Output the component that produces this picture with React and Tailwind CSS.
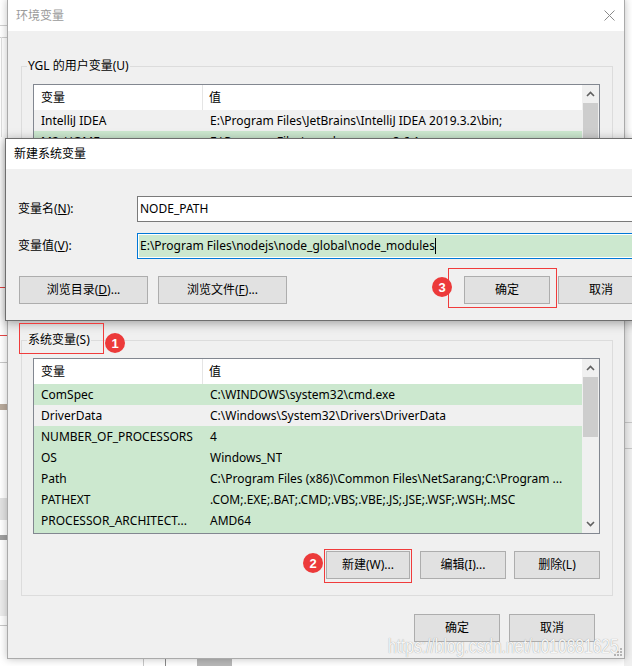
import React from "react";

function Btn({ children, className = "" }) {
  return (
    <div
      className={`h-[28px] shrink-0 flex items-center justify-center bg-[#e1e1e1] border border-[#adadad] text-black leading-none ${className}`}
    >
      {children}
    </div>
  );
}

function Chevron({ down = false }) {
  return (
    <svg width="9" height="6" viewBox="0 0 9 6">
      <path
        d={down ? "M1 1 L4.5 4.5 L8 1" : "M1 5 L4.5 1.5 L8 5"}
        stroke="#606060"
        strokeWidth="1.6"
        fill="none"
      />
    </svg>
  );
}

function Scrollbar() {
  return (
    <div className="w-[17px] shrink-0 bg-[#f0f0f0] flex flex-col">
      <div className="h-[18px] shrink-0 flex items-center justify-center">
        <Chevron />
      </div>
      <div className="mx-[1px] h-[60px] shrink-0 bg-[#cdcdcd]" />
      <div className="flex-1" />
      <div className="h-[18px] shrink-0 flex items-center justify-center">
        <Chevron down />
      </div>
    </div>
  );
}

function VarList({ rows }) {
  return (
    <div className="h-[176px] shrink-0 border border-[#828790] flex bg-white">
      <div className="flex-1 min-w-0 flex flex-col bg-[#cce8cf] overflow-hidden">
        <div className="h-[25px] shrink-0 flex bg-white">
          <div className="w-[169px] shrink-0 pl-[7px] flex items-center border-r border-[#e5e5e5]">
            变量
          </div>
          <div className="pl-[6px] flex items-center">值</div>
        </div>
        {rows.map((r, i) => (
          <div
            key={i}
            className={`h-[21px] shrink-0 flex items-center whitespace-nowrap ${
              r.light ? "bg-[#f0f0f0]" : ""
            }`}
          >
            <div className="w-[169px] shrink-0 pl-[7px] overflow-hidden">{r.n}</div>
            <div className="pl-[7px] overflow-hidden">{r.v}</div>
          </div>
        ))}
      </div>
      <Scrollbar />
    </div>
  );
}

function Group({ label, className = "", children }) {
  return (
    <div className={`relative border border-[#dcdcdc] shrink-0 ${className}`}>
      <span className="absolute left-[5px] top-[-9px] px-[1px] bg-[#f0f0f0] leading-[16px] whitespace-nowrap">
        {label}
      </span>
      {children}
    </div>
  );
}

function Badge({ n, className }) {
  return (
    <div
      className={`absolute w-[20px] h-[20px] rounded-full bg-[#ec3a3a] text-white flex items-center justify-center text-[13px] font-bold leading-none font-['Liberation_Sans',sans-serif] ${className}`}
    >
      {n}
    </div>
  );
}

const userRows = [
  { n: "IntelliJ IDEA", v: "E:\\Program Files\\JetBrains\\IntelliJ IDEA 2019.3.2\\bin;", light: true },
  { n: "M2_HOME", v: "E:\\Program Files\\apache-maven-3.6.1" },
];

const sysRows = [
  { n: "ComSpec", v: "C:\\WINDOWS\\system32\\cmd.exe" },
  { n: "DriverData", v: "C:\\Windows\\System32\\Drivers\\DriverData", light: true },
  { n: "NUMBER_OF_PROCESSORS", v: "4" },
  { n: "OS", v: "Windows_NT" },
  { n: "Path", v: "C:\\Program Files (x86)\\Common Files\\NetSarang;C:\\Program ..." },
  { n: "PATHEXT", v: ".COM;.EXE;.BAT;.CMD;.VBS;.VBE;.JS;.JSE;.WSF;.WSH;.MSC" },
  { n: "PROCESSOR_ARCHITECT...", v: "AMD64" },
];

export default function App() {
  return (
    <div className="relative w-[632px] h-[666px] overflow-hidden bg-white text-[12px] text-black font-['Noto_Sans','Noto_Sans_CJK_SC',sans-serif]">
      {/* background desktop fragments */}
      <div className="absolute left-0 top-[25px] w-[7px] h-[1px] bg-[#d0d0d0]" />
      <div className="absolute left-0 top-[37px] w-[7px] h-[1px] bg-[#d0d0d0]" />
      <div className="absolute left-[1px] top-[37px] w-[1px] h-[100px] bg-[#e0e0e0]" />
      <div className="absolute left-0 top-[287px] w-[5px] h-[1px] bg-[#e84545]" />
      <div className="absolute left-0 top-[335px] w-[7px] h-[1px] bg-[#e84545]" />
      <div className="absolute left-0 top-[362px] w-[7px] h-[1px] bg-[#c8c8c8]" />
      <div className="absolute left-0 top-[404px] w-[7px] h-[6px] bg-[#b9aa9c]" />
      <div className="absolute left-0 top-[498px] w-[7px] h-[22px] bg-[#e2e2e2]" />
      <div className="absolute left-0 top-[535px] w-[7px] h-[5px] bg-[#a0a0a0]" />
      <div className="absolute left-0 top-[580px] w-[7px] h-[36px] bg-[#ececec]" />
      <div className="absolute left-0 top-[625px] w-[7px] h-[1px] bg-[#c8c8c8]" />
      <div className="absolute left-[624px] top-[320px] w-[8px] h-[346px] bg-[#f0f0f0]" />
      <div className="absolute left-[624px] top-[422px] w-[8px] h-[1px] bg-[#c8c8c8]" />
      <div className="absolute left-[624px] top-[448px] w-[8px] h-[1px] bg-[#c8c8c8]" />
      <div className="absolute left-[143px] top-[658px] w-[1px] h-[8px] bg-[#c8c8c8]" />
      <div className="absolute left-[165px] top-[658px] w-[1px] h-[8px] bg-[#8a8a8a]" />
      <div className="absolute left-[197px] top-[659px] w-[35px] h-[7px] bg-[#b8b8b8]" />

      {/* main window: 环境变量 */}
      <div className="absolute left-[7px] top-[-1px] w-[618px] h-[660px] border border-[#aaaaaa] bg-[#f0f0f0] flex flex-col shadow-[0_0_8px_rgba(0,0,0,0.25)]">
        <div className="h-[31px] shrink-0 bg-white flex items-center pl-[8px] pr-[9px]">
          <span className="text-[#9a9a9a] leading-none">环境变量</span>
          <svg className="ml-auto" width="11" height="11" viewBox="0 0 11 11">
            <path d="M0.5 0.5 L10.5 10.5 M10.5 0.5 L0.5 10.5" stroke="#8a8a8a" strokeWidth="1" fill="none" />
          </svg>
        </div>
        <div className="flex flex-col pl-[13px] pr-[11px]">
          <Group label="YGL 的用户变量(U)" className="mt-[35px] h-[253px] pt-[17px] pl-[11px] pr-[12px]">
            <VarList rows={userRows} />
          </Group>
          <Group label="系统变量(S)" className="mt-[21px] pt-[17px] pl-[11px] pr-[12px] pb-[16px]">
            <VarList rows={sysRows} />
            <div className="mt-[17px] flex justify-end">
              <Btn className="w-[84px]">新建(W)...</Btn>
              <Btn className="w-[86px] ml-[10px]">编辑(I)...</Btn>
              <Btn className="w-[86px] ml-[8px]">删除(L)</Btn>
            </div>
          </Group>
          <div className="mt-[18px] flex justify-end pr-[18px]">
            <Btn className="w-[86px]">确定</Btn>
            <Btn className="w-[86px] ml-[9px]">取消</Btn>
          </div>
        </div>
        <svg className="absolute right-[2px] bottom-[2px]" width="9" height="9" viewBox="0 0 9 9">
          <g fill="#b4b4b4">
            <rect x="7" y="1" width="2" height="2" />
            <rect x="4" y="4" width="2" height="2" />
            <rect x="7" y="4" width="2" height="2" />
            <rect x="1" y="7" width="2" height="2" />
            <rect x="4" y="7" width="2" height="2" />
            <rect x="7" y="7" width="2" height="2" />
          </g>
        </svg>
      </div>

      {/* dialog: 新建系统变量 */}
      <div className="absolute left-[5px] top-[138px] w-[700px] h-[183px] border border-[#6e6e6e] bg-[#f0f0f0] flex flex-col shadow-[0_2px_10px_rgba(0,0,0,0.35)]">
        <div className="h-[30px] shrink-0 bg-white flex items-center pl-[8px]">
          <span className="leading-none">新建系统变量</span>
        </div>
        <div className="flex flex-col pl-[12px]">
          <div className="mt-[27px] h-[26px] flex items-center">
            <div className="w-[119px] shrink-0 leading-none">
              变量名(<span className="underline">N</span>):
            </div>
            <div className="w-[560px] h-[26px] border border-[#7a7a7a] bg-white flex items-center pl-[2px] leading-none">
              NODE_PATH
            </div>
          </div>
          <div className="mt-[11px] h-[26px] flex items-center">
            <div className="w-[119px] shrink-0 leading-none">
              变量值(<span className="underline">V</span>):
            </div>
            <div className="w-[560px] h-[26px] border border-[#0078d7] bg-white p-[1px] flex">
              <div className="flex-1 bg-[#cce8cf] flex items-center pl-[1px] leading-none whitespace-nowrap">
                <span>E:\Program Files\nodejs\node_global\node_modules</span>
                <span className="w-[1px] h-[16px] bg-black" />
              </div>
            </div>
          </div>
          <div className="mt-[17px] flex items-center">
            <Btn className="w-[129px] ml-[1px]">
              浏览目录(<span className="underline">D</span>)...
            </Btn>
            <Btn className="w-[129px] ml-[10px]">
              浏览文件(<span className="underline">F</span>)...
            </Btn>
            <Btn className="w-[86px] ml-[177px]">确定</Btn>
            <Btn className="w-[86px] ml-[8px]">取消</Btn>
          </div>
        </div>
      </div>

      {/* annotations */}
      <div className="absolute left-[19px] top-[323px] w-[85px] h-[31px] border border-[#f03c3c]" />
      <div className="absolute left-[324px] top-[549px] w-[88px] h-[34px] border border-[#f03c3c]" />
      <div className="absolute left-[448px] top-[268px] w-[109px] h-[40px] border border-[#f03c3c]" />
      <Badge n="1" className="left-[105px] top-[333px]" />
      <Badge n="2" className="left-[303px] top-[553px]" />
      <Badge n="3" className="left-[432px] top-[277px]" />

      {/* watermark */}
      <div className="absolute left-[388px] top-[636px] origin-left scale-x-[0.78] whitespace-nowrap text-[20px] leading-none font-['Liberation_Sans',sans-serif] text-[#f6f6f6] [text-shadow:0_0_1px_#8c8c8c]">
        https://blog.csdn.net/u010881625
      </div>
    </div>
  );
}
